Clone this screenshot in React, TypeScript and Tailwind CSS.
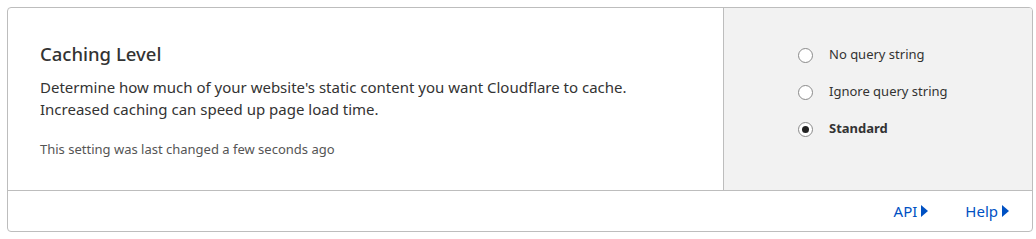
import React from "react";

const Arrow = () => (
  <svg width="7" height="12" viewBox="0 0 7 12" className="ml-[4px] inline-block">
    <path d="M0 0 L7 6 L0 12 Z" fill="currentColor" />
  </svg>
);

const Radio = ({ label, checked }: { label: string; checked?: boolean }) => (
  <div className="flex items-center h-[22px]">
    <span className="w-[15px] h-[15px] rounded-full border border-[#8a8a8a] bg-white flex items-center justify-center">
      {checked && <span className="w-[7px] h-[7px] rounded-full bg-[#222]" />}
    </span>
    <span className={`ml-[16px] text-[13px] text-[#333] ${checked ? "font-bold" : ""}`}>{label}</span>
  </div>
);

export default function App() {
  return (
    <div className="w-[1036px] h-[239px] bg-white pt-[7px] pl-[7px]" style={{ fontFamily: '"Noto Sans", "Open Sans", sans-serif' }}>
      <div className="w-[1026px] h-[225px] border border-[#bdbdbd] rounded-[4px] flex flex-col overflow-hidden">
        <div className="flex h-[183px] border-b border-[#bdbdbd]">
          <div className="flex-1 pl-[32px] pt-[34px]">
            <div className="text-[18.5px] leading-[24px] text-[#333] font-medium">Caching Level</div>
            <div className="mt-[10px] text-[15px] leading-[22px] text-[#333]">
              Determine how much of your website's static content you want Cloudflare to cache.
              <br />
              Increased caching can speed up page load time.
            </div>
            <div className="mt-[20px] text-[13px] leading-[18px] text-[#555]">This setting was last changed a few seconds ago</div>
          </div>
          <div className="w-[309px] bg-[#f2f2f2] border-l border-[#bdbdbd] pl-[74px] pt-[36px] flex flex-col gap-[15px]">
            <Radio label="No query string" />
            <Radio label="Ignore query string" />
            <Radio label="Standard" checked />
          </div>
        </div>
        <div className="flex-1 flex items-center justify-end pr-[23px] gap-[37px] text-[15px] text-[#0051c3]">
          <span className="flex items-center">API<Arrow /></span>
          <span className="flex items-center">Help<Arrow /></span>
        </div>
      </div>
    </div>
  );
}
